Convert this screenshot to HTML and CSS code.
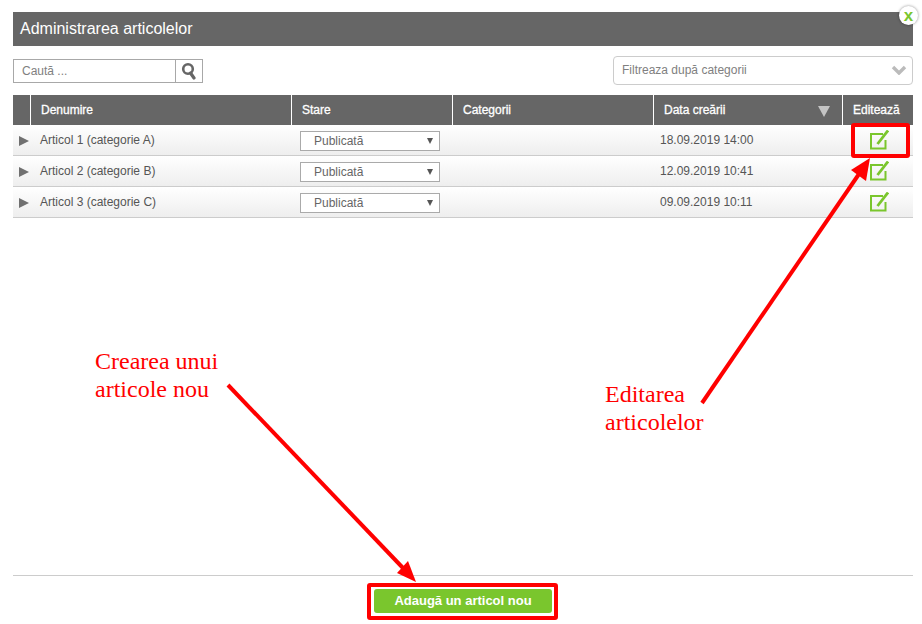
FILE: index.html
```html
<!DOCTYPE html>
<html lang="ro">
<head>
<meta charset="utf-8">
<title>Administrarea articolelor</title>
<link rel="stylesheet" href="styles.css">
</head>
<body>
<main class="panel">
  <header class="title-bar"><h1>Administrarea articolelor</h1></header>
  <button class="close" aria-label="Închide">x</button>

  <div class="toolbar">
    <div class="search">
      <span class="search-text">Caută ...</span>
      <span class="search-btn">
        <svg width="16" height="18" viewBox="0 0 16 18"><circle cx="7" cy="7" r="4.800" fill="none" stroke="#666" stroke-width="2.600"/><path d="M9.500 11l3.500 5" stroke="#666" stroke-width="3.200" stroke-linecap="round"/></svg>
      </span>
    </div>
    <div class="filter">
      <span>Filtreaza după categorii</span>
      <svg width="16" height="10" viewBox="0 0 16 10"><path d="M2 2l6 6 6-6" fill="none" stroke="#bbb" stroke-width="3.400"/></svg>
    </div>
  </div>

  <div class="grid head">
    <div></div>
    <div>Denumire</div>
    <div>Stare</div>
    <div>Categorii</div>
    <div class="sorted">Data creării<span class="sort-arrow"></span></div>
    <div>Editează</div>
  </div>

  <div class="grid row">
    <div class="expander"><span class="tri"></span></div>
    <div>Articol 1 (categorie A)</div>
    <div><span class="status">Publicată<span class="mini-arrow"></span></span></div>
    <div></div>
    <div>18.09.2019 14:00</div>
    <div class="edit-cell"><svg class="edit-icon" width="20" height="20" viewBox="0 0 20 20"><path d="M14 4H2v14.500h14.500V10" fill="none" stroke="#7ac62d" stroke-width="2"/><path d="M8.500 14L19 .5" stroke="#7ac62d" stroke-width="2.800"/></svg></div>
  </div>
  <div class="grid row">
    <div class="expander"><span class="tri"></span></div>
    <div>Articol 2 (categorie B)</div>
    <div><span class="status">Publicată<span class="mini-arrow"></span></span></div>
    <div></div>
    <div>12.09.2019 10:41</div>
    <div class="edit-cell"><svg class="edit-icon" width="20" height="20" viewBox="0 0 20 20"><path d="M14 4H2v14.500h14.500V10" fill="none" stroke="#7ac62d" stroke-width="2"/><path d="M8.500 14L19 .5" stroke="#7ac62d" stroke-width="2.800"/></svg></div>
  </div>
  <div class="grid row">
    <div class="expander"><span class="tri"></span></div>
    <div>Articol 3 (categorie C)</div>
    <div><span class="status">Publicată<span class="mini-arrow"></span></span></div>
    <div></div>
    <div>09.09.2019 10:11</div>
    <div class="edit-cell"><svg class="edit-icon" width="20" height="20" viewBox="0 0 20 20"><path d="M14 4H2v14.500h14.500V10" fill="none" stroke="#7ac62d" stroke-width="2"/><path d="M8.500 14L19 .5" stroke="#7ac62d" stroke-width="2.800"/></svg></div>
  </div>

  <div class="spacer"></div>
  <footer class="footer"><button class="add">Adaugă un articol nou</button></footer>
</main>

<svg class="marks" width="922" height="624" viewBox="0 0 922 624">
  <g fill="none" stroke="#f00" stroke-width="4">
    <rect x="853" y="125" width="55" height="31" rx="1"/>
    <rect x="369" y="585" width="187" height="33" rx="1"/>
    <path d="M702 403L859 174"/>
    <path d="M228 385L403 568"/>
  </g>
  <g fill="#f00">
    <path d="M870 158L851 170L866 181Z"/>
    <path d="M416 582L397 573L408 561Z"/>
  </g>
</svg>
<p class="note note-create">Crearea unui<br>articole nou</p>
<p class="note note-edit">Editarea<br>articolelor</p>
</body>
</html>
```
FILE: styles.css
```css
* { box-sizing: border-box; }
html, body { margin: 0; height: 100%; }
body {
  position: relative;
  width: 922px;
  height: 624px;
  overflow: hidden;
  background: #fff;
  font-family: "Liberation Sans", Arial, sans-serif;
  color: #555;
}
.panel {
  width: 900px;
  height: 624px;
  margin-left: 13px;
  padding-top: 12px;
  display: flex;
  flex-direction: column;
}
.title-bar {
  height: 34px;
  background: #666;
  display: flex;
  align-items: center;
  padding-left: 7px;
}
.title-bar h1 {
  margin: 0;
  font-size: 16px;
  font-weight: 400;
  color: #fff;
}
.close {
  position: absolute;
  left: 899px;
  top: 6px;
  width: 19px;
  height: 19px;
  padding: 0;
  border: 0;
  border-radius: 50%;
  background: #fff;
  box-shadow: 0 0 3px rgba(0,0,0,.45);
  color: #7ac62d;
  font: 700 17px/17px "Liberation Sans", Arial, sans-serif;
}
.toolbar {
  height: 49px;
  display: flex;
  justify-content: space-between;
  align-items: flex-start;
}
.search {
  margin-top: 13px;
  width: 190px;
  height: 24px;
  border: 1px solid #a8a8a8;
  display: flex;
  font-size: 12px;
}
.search-text {
  flex: 1;
  padding-left: 8px;
  line-height: 22px;
  color: #808080;
}
.search-btn {
  width: 27px;
  border-left: 1px solid #a8a8a8;
  display: flex;
  align-items: center;
  justify-content: center;
}
.filter {
  margin-top: 10px;
  width: 300px;
  height: 29px;
  border: 1px solid #ccc;
  border-radius: 4px;
  padding: 0 5px 2px 8px;
  display: flex;
  align-items: center;
  justify-content: space-between;
  font-size: 12px;
  color: #808080;
}
.grid {
  display: grid;
  grid-template-columns: 18px 261px 161px 201px 189px 70px;
}
.head {
  height: 30px;
  background: #666;
  color: #fff;
  font-size: 12px;
  -webkit-text-stroke: .3px #fff;
}
.head > div {
  border-right: 1px solid #fff;
  padding-left: 10px;
  line-height: 30px;
}
.head > div:last-child { border-right: 0; }
.sorted { position: relative; }
.sort-arrow {
  position: absolute;
  right: 12px;
  top: 11px;
  border-style: solid;
  border-width: 11px 6px 0;
  border-color: #c4c4c4 transparent transparent;
}
.row {
  height: 31px;
  border-bottom: 1px solid #ccc;
  background: linear-gradient(#fff, #eee);
  font-size: 12px;
  color: #555;
}
.row > div {
  padding-left: 9px;
  line-height: 30px;
  display: flex;
  align-items: flex-start;
}
.row > .expander { padding-left: 6px; align-items: center; }
.tri {
  border-style: solid;
  border-width: 5px 0 5px 10px;
  border-color: transparent transparent transparent #707070;
  margin-top: 1px;
}
.row > div:nth-child(3) { padding-left: 8px; }
.row > div:nth-child(5) { padding-left: 6px; }
.status {
  margin-top: 6px;
  width: 140px;
  height: 20px;
  border: 1px solid #aaa;
  padding-left: 13px;
  background: #fff;
  line-height: 19px;
  color: #666;
  position: relative;
}
.mini-arrow {
  position: absolute;
  right: 6px;
  top: 6px;
  border-style: solid;
  border-width: 6px 3px 0;
  border-color: #555 transparent transparent;
}
.row > .edit-cell {
  padding: 5px 0 0 26px;
}
.edit-icon { display: block; }
.spacer { flex: 1; }
.footer {
  height: 49px;
  border-top: 1px solid #ccc;
  display: flex;
  justify-content: center;
  padding-top: 13px;
}
.add {
  width: 178px;
  height: 24px;
  padding: 0;
  border: 0;
  border-radius: 3px;
  background: #7ac62d;
  color: #fff;
  font: 700 13px/24px "Liberation Sans", Arial, sans-serif;
}
.marks {
  position: absolute;
  left: 0;
  top: 0;
  pointer-events: none;
}
.note {
  position: absolute;
  margin: 0;
  color: #f00;
  font: 24px/28px "Liberation Serif", "Times New Roman", serif;
}
.note-create { left: 95px; top: 347px; }
.note-edit { left: 605px; top: 380px; }
```
